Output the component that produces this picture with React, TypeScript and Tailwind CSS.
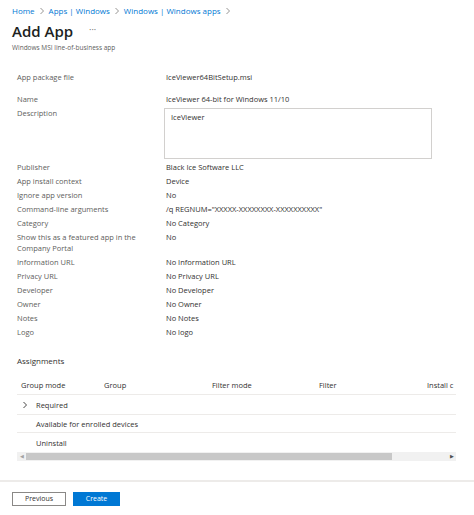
import React from 'react';

const font = { fontFamily: '"Open Sans", "Noto Sans", sans-serif' };

const rows: { label: string; value: string }[] = [
  { label: 'Publisher', value: 'Black Ice Software LLC' },
  { label: 'App install context', value: 'Device' },
  { label: 'Ignore app version', value: 'No' },
  { label: 'Command-line arguments', value: '/q REGNUM="XXXXX-XXXXXXXX-XXXXXXXXXX"' },
  { label: 'Category', value: 'No Category' },
];

const rows2: { label: string; value: string }[] = [
  { label: 'Information URL', value: 'No Information URL' },
  { label: 'Privacy URL', value: 'No Privacy URL' },
  { label: 'Developer', value: 'No Developer' },
  { label: 'Owner', value: 'No Owner' },
  { label: 'Notes', value: 'No Notes' },
  { label: 'Logo', value: 'No logo' },
];

function Chevron({ className = '' }: { className?: string }) {
  return (
    <svg width="6" height="8" viewBox="0 0 6 8" className={className}>
      <path d="M1.5 1 L4.5 4 L1.5 7" fill="none" stroke="currentColor" strokeWidth="0.9" />
    </svg>
  );
}

function Row({ label, value }: { label: string; value: string }) {
  return (
    <div className="flex h-[14px] items-center">
      <div className="w-[149px] shrink-0 text-[#605e5c]">{label}</div>
      <div className="text-[#323130]">{value}</div>
    </div>
  );
}

export default function App() {
  return (
    <div className="w-[474px] h-[515px] bg-white overflow-hidden text-[7.5px] leading-[14px]" style={font}>
      {/* breadcrumb */}
      <div className="flex items-center gap-[4px] px-[12px] pt-[5px] h-[17px] text-[8px] text-[#0078d4]">
        <span>Home</span>
        <Chevron className="text-[#8a8886]" />
        <span>Apps | Windows</span>
        <Chevron className="text-[#8a8886]" />
        <span>Windows | Windows apps</span>
        <Chevron className="text-[#8a8886]" />
      </div>

      {/* title */}
      <div className="mt-[3px] flex items-center px-[12px] h-[22px]">
        <h1 className="text-[15px] font-semibold text-[#201f1e] leading-[22px]">Add App</h1>
        <span className="ml-[16px] text-[9px] text-[#605e5c] leading-none -mt-[4px]">···</span>
      </div>
      <div className="mt-[1px] px-[12px] text-[6.5px] leading-[9px] text-[#605e5c]">Windows MSI line-of-business app</div>

      {/* properties */}
      <div className="px-[17px] pt-[18px]">
        <div className="mb-[8px]">
          <Row label="App package file" value="IceViewer64BitSetup.msi" />
        </div>
        <Row label="Name" value="IceViewer 64-bit for Windows 11/10" />
        <div className="flex h-[54px]">
          <div className="w-[147px] shrink-0 text-[#605e5c]">Description</div>
          <div className="mt-[2px] h-[51px] w-[268px] border border-[#d2d0ce] px-[6px] pt-[1px] text-[#323130]">
            IceViewer
          </div>
        </div>
        {rows.map((r) => (
          <Row key={r.label} {...r} />
        ))}
        <div className="flex py-[1.5px] leading-[11px]">
          <div className="w-[149px] shrink-0 text-[#605e5c]">
            Show this as a featured app in the
            <br />
            Company Portal
          </div>
          <div className="text-[#323130]">No</div>
        </div>
        {rows2.map((r) => (
          <Row key={r.label} {...r} />
        ))}

        {/* assignments */}
        <div className="mt-[15px] text-[8px] font-medium text-[#323130]">Assignments</div>

        <div className="mt-[8px] w-[439px] overflow-hidden">
          <div className="flex h-[19px] items-center border-b border-[#edebe9] font-medium text-[#323130]">
            <div className="w-[87px] pl-[4px]">Group mode</div>
            <div className="w-[108px]">Group</div>
            <div className="w-[107px]">Filter mode</div>
            <div className="w-[108px]">Filter</div>
            <div className="whitespace-nowrap">Install c</div>
          </div>
          <div className="flex h-[20px] items-center border-b border-[#edebe9] font-medium text-[#323130]">
            <Chevron className="ml-[5px] mr-[8px] h-[10px] w-[6px] text-[#323130]" />
            <span>Required</span>
          </div>
          <div className="flex h-[18px] items-center border-b border-[#edebe9] pl-[19px] font-medium text-[#323130]">
            Available for enrolled devices
          </div>
          <div className="flex h-[19px] items-center pl-[19px] font-medium text-[#323130]">Uninstall</div>
          {/* scrollbar */}
          <div className="flex h-[9px] items-center bg-[#f1f1f1]">
            <span className="w-[9px] text-center text-[5px] leading-none text-[#a3a3a3]">◀</span>
            <div className="h-[7px] w-[366px] bg-[#c8c8c8]" />
            <div className="flex-1" />
            <span className="w-[9px] text-center text-[5px] leading-none text-[#505050]">▶</span>
          </div>
        </div>
      </div>

      {/* footer */}
      <div className="mt-[19px] border-t-2 border-[#edebe9] px-[12px] pt-[10px]">
        <div className="flex gap-[7px]">
          <button className="h-[14px] w-[54px] border border-[#8a8886] bg-white text-[7px] font-medium leading-[12px] text-[#323130]">
            Previous
          </button>
          <button className="h-[14px] w-[47px] bg-[#0078d4] text-[7px] font-medium leading-[14px] text-white">
            Create
          </button>
        </div>
      </div>
    </div>
  );
}
